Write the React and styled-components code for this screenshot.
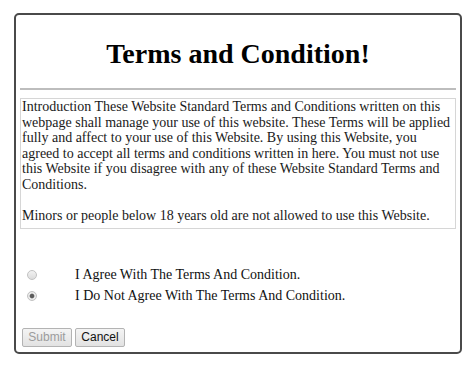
import { createGlobalStyle, styled } from "styled-components";

const Global = createGlobalStyle`
  html, body { margin: 0; padding: 0; background: #fff; }
  body { font-family: "Liberation Serif", "Times New Roman", serif; color: #111; }
`;

export default function App() {
  return (
    <>
      <Global />
      <Page>
        <Card>
          <Title>Terms and Condition!</Title>
          <Rule />
          <TermsBox>
            Introduction These Website Standard Terms and Conditions written on this
            webpage shall manage your use of this website. These Terms will be applied
            fully and affect to your use of this Website. By using this Website, you
            agreed to accept all terms and conditions written in here. You must not use
            this Website if you disagree with any of these Website Standard Terms and
            Conditions.
            <Para>Minors or people below 18 years old are not allowed to use this Website.</Para>
          </TermsBox>
          <Choices>
            <Choice>
              <Radio />
              <Label>I Agree With The Terms And Condition.</Label>
            </Choice>
            <Choice>
              <Radio $checked />
              <Label>I Do Not Agree With The Terms And Condition.</Label>
            </Choice>
          </Choices>
          <Buttons>
            <Button $disabled>Submit</Button>
            <Button>Cancel</Button>
          </Buttons>
        </Card>
      </Page>
    </>
  );
}

const Page = styled.div`
  padding: 13px 12px 0 14px;
`;

const Card = styled.div`
  width: 448px;
  box-sizing: border-box;
  border: 2px solid #4a4a4a;
  border-radius: 5px;
  padding: 0 4px 5px;
  display: flex;
  flex-direction: column;
`;

const Title = styled.h1`
  margin: 23px 0 0;
  text-align: center;
  font-size: 28px;
  font-weight: bold;
  line-height: 32px;
  color: #000;
`;

const Rule = styled.div`
  height: 2px;
  background: #bdbdbd;
  margin-top: 18px;
`;

const TermsBox = styled.div`
  margin-top: 8px;
  border: 1px solid #d6d6d6;
  padding: 0 1px 4px 1px;
  font-size: 14px;
  line-height: 15.6px;
  color: #1a1a1a;
`;

const Para = styled.p`
  margin: 15.6px 0 0;
`;

const Choices = styled.div`
  margin-top: 38px;
  display: flex;
  flex-direction: column;
  gap: 5px;
  padding-left: 7px;
`;

const Choice = styled.div`
  display: flex;
  align-items: center;
  height: 16px;
`;

const Radio = styled.span`
  width: 10px;
  height: 10px;
  border-radius: 50%;
  box-sizing: border-box;
  border: 1px solid #c2c2c2;
  background: ${(p) =>
    p.$checked
      ? "radial-gradient(circle, #5c5c5c 0 1.8px, #9a9a9a 2.3px, #ececec 2.8px, #e4e4e4)"
      : "linear-gradient(#f2f2f2, #dcdcdc)"};
`;

const Label = styled.span`
  margin-left: 38px;
  font-size: 14px;
  line-height: 16px;
  color: #111;
`;

const Buttons = styled.div`
  margin-top: 24px;
  display: flex;
  gap: 3px;
  padding-left: 2px;
`;

const Button = styled.button`
  font-family: "Liberation Sans", Arial, sans-serif;
  font-size: 12px;
  width: 50px;
  height: 19px;
  padding: 0;
  border: 1px solid #b3b3b3;
  border-radius: 2px;
  background: linear-gradient(#f4f4f4, #e2e2e2);
  color: ${(p) => (p.$disabled ? "#9c9c9c" : "#111")};
`;
